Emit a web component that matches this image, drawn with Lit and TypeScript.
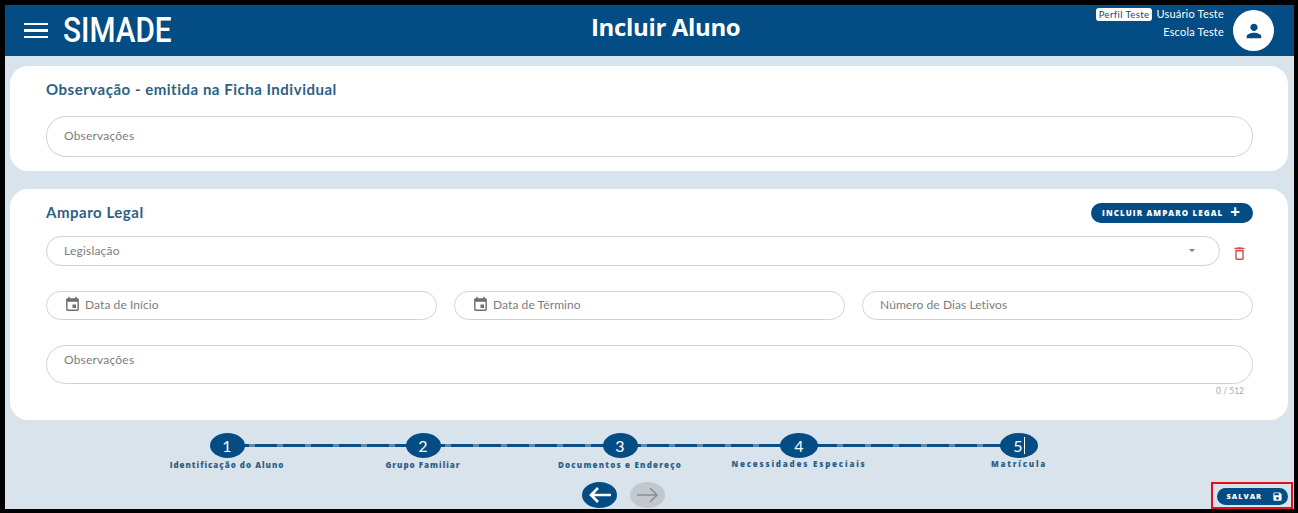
import { LitElement, html, css, svg } from "lit";
import { customElement } from "lit/decorators.js";

const icon = (d: string, cls: string) => html`<svg class=${cls} viewBox="0 0 24 24" fill="currentColor">${svg`<path d=${d}></path>`}</svg>`;
const CAL = "M17 12h-5v5h5v-5zM16 1v2H8V1H6v2H5c-1.11 0-1.99.9-1.99 2L3 19c0 1.1.89 2 2 2h14c1.1 0 2-.9 2-2V5c0-1.1-.9-2-2-2h-1V1h-2zm3 18H5V8h14v11z";
const PERSON = "M12 12c2.21 0 4-1.79 4-4s-1.79-4-4-4-4 1.79-4 4 1.79 4 4 4zm0 2c-2.67 0-8 1.34-8 4v2h16v-2c0-2.66-5.33-4-8-4z";
const TRASH = "M6 19c0 1.1.9 2 2 2h8c1.1 0 2-.9 2-2V7H6v12zM8 9h8v10H8V9zm7.5-5l-1-1h-5l-1 1H5v2h14V4h-3.5z";
const SAVE = "M17 3H5c-1.11 0-2 .9-2 2v14c0 1.1.89 2 2 2h14c1.1 0 2-.9 2-2V7l-4-4zm-5 16c-1.66 0-3-1.34-3-3s1.34-3 3-3 3 1.34 3 3-1.34 3-3 3zm3-10H5V5h10v4z";
const steps = [
  { n: "1", label: "Identificação do Aluno", w: "w196", cls: "" },
  { n: "2", label: "Grupo Familiar", w: "w196", cls: "" },
  { n: "3", label: "Documentos e Endereço", w: "w198", cls: "" },
  { n: "4", label: "Necessidades Especiais", w: "w160", cls: "up wide" },
  { n: "5", label: "Matrícula", w: "w280", cls: "up wide caret" },
];

@customElement("app-root")
export class AppRoot extends LitElement {
  static styles = css`
    :host { display: block; width: 1298px; height: 513px; overflow: hidden; }
    * { box-sizing: border-box; }
    .frame { width: 1298px; height: 513px; border: solid #000; border-width: 5px 4px 4px 5px; background: #d9e3ec; font-family: Lato, "Open Sans", sans-serif; color: #7b7f83; display: flex; flex-direction: column; }
    header { height: 51px; flex: none; background: #034c84; color: #fff; display: grid; grid-template-columns: 586px 149px 1fr; align-items: center; }
    .brand { display: flex; align-items: center; padding-left: 19px; gap: 15px; }
    .menu { width: 24px; height: 16px; display: flex; flex-direction: column; justify-content: space-between; }
    .menu i { display: block; height: 2.4px; background: #fff; }
    .logo { font: 500 35px/1 Roboto, sans-serif; width: 109px; display: inline-block; transform: scaleX(.85); transform-origin: left center; }
    h1 { margin: 0; font: 700 24px/1 "Open Sans", sans-serif; white-space: nowrap; letter-spacing: -.35px; padding-bottom: 7px; }
    .user { justify-self: end; display: flex; align-items: center; padding-right: 20px; gap: 9px; }
    .who { font-size: 11px; text-align: right; display: flex; flex-direction: column; gap: 5px; line-height: 12px; padding-bottom: 15px; letter-spacing: .2px; }
    .badge { background: #fff; color: #034c84; font-size: 9.5px; border-radius: 3px; padding: 0 3px; margin-right: 4px; display: inline-block; line-height: 13px; letter-spacing: .4px; }
    .avatar { width: 41px; height: 41px; border-radius: 50%; background: #fff; color: #034c84; display: grid; place-items: center; }
    .avatar svg { width: 22px; height: 22px; }
    main { flex: none; padding: 10px 6px 0 5px; display: flex; flex-direction: column; gap: 18px; }
    .card { background: #fff; border-radius: 18px; padding: 0 35px 0 36px; }
    .c1 { height: 105px; padding-top: 13px; }
    .c2 { height: 231px; padding-top: 13px; }
    .head { display: flex; align-items: center; justify-content: space-between; height: 20px; }
    h2 { margin: 0; font: 700 15px/20px Lato, sans-serif; color: #2e5f85; letter-spacing: .52px; }
    .field { border: 1.5px solid #d2d2d2; border-radius: 20px; display: flex; align-items: center; padding: 0 17px 2px; font-size: 12px; letter-spacing: .2px; color: #7d7d7d; }
    .c1 .field { height: 41px; margin-top: 17px; }
    .btn { background: #034c84; color: #fff; border-radius: 10px; height: 20px; width: 162px; margin-top: 1px; display: flex; align-items: center; justify-content: flex-start; padding-left: 11px; gap: 7px; font: 800 8px/1 "Open Sans", sans-serif; letter-spacing: 1.1px; }
    .plus { font-size: 17px; font-weight: 700; line-height: 1; letter-spacing: 0; padding-bottom: 2px; }
    .selrow { display: flex; align-items: center; margin-top: 14px; }
    .sel { flex: 1; height: 30px; justify-content: space-between; padding-right: 24px; }
    .sel b { border: solid transparent; border-width: 3px 3.5px 0; border-top-color: #7a7a7a; }
    .trash { width: 17px; height: 17px; color: #e0494a; margin: 4px 5.5px 0 10.5px; flex: none; }
    .dates { display: grid; grid-template-columns: repeat(3, 1fr); gap: 17px; margin-top: 25px; }
    .dates .field { height: 29px; letter-spacing: .08px; }
    .date { gap: 4px; }
    .date svg { width: 17px; height: 17px; color: #6e6e6e; flex: none; }
    .area { height: 39px; margin-top: 25px; align-items: flex-start; padding-top: 6px; }
    .count { text-align: right; font-size: 8.5px; color: #a9a9a9; padding: 2px 9px 0 0; line-height: 11px; }
    .stepper { margin-top: 13px; padding-left: 124px; display: flex; position: relative; height: 49px; flex: none; }
    .line { position: absolute; left: 222px; width: 792px; top: 11px; height: 3px; background: repeating-linear-gradient(90deg, #0b4f86 0 22px, #5d88ab 22px 28px); }
    .step { display: flex; flex-direction: column; align-items: center; position: relative; }
    .w196 { width: 196px; } .w198 { width: 198px; } .w160 { width: 160px; } .w280 { width: 280px; }
    .dot { width: 35px; height: 25px; border-radius: 50%; background: #034c84; color: #fff; display: grid; place-items: center; font-size: 16px; }
    .wide .dot { width: 38px; }
    .caret .dot span { border-right: 1px solid #fff; padding-right: 1px; line-height: 17px; }
    .label { font: 800 8px/1 "Open Sans", sans-serif; color: #2e5f85; letter-spacing: 1px; white-space: nowrap; margin-top: 3px; }
    .w198 .label { letter-spacing: 1.2px; }
    .up .label { margin-top: 2px; letter-spacing: 1.8px; }
    .bottom { flex: none; height: 27px; display: flex; padding-left: 577px; padding-right: 1px; justify-content: space-between; }
    .nav { display: flex; gap: 13px; }
    .arrow { width: 35px; height: 26px; border-radius: 50%; display: grid; place-items: center; background: #034c84; color: #fff; }
    .arrow.off { background: #c3c8cc; color: #8a8f93; }
    .arrow svg { width: 24px; height: 18px; }
    .savebox { width: 82px; height: 27px; border: 2px solid #e0101c; display: flex; align-items: flex-end; justify-content: center; padding-bottom: 2px; }
    .save { width: 71px; height: 17px; border-radius: 9px; background: #034c84; color: #fff; display: flex; align-items: center; justify-content: flex-start; padding-left: 10px; gap: 10px; font: 800 7.5px/1 "Open Sans", sans-serif; letter-spacing: .95px; }
    .save svg { width: 11px; height: 11px; }
  `;

  render() {
    return html`<div class="frame">
      <header>
        <div class="brand"><div class="menu"><i></i><i></i><i></i></div><span class="logo">SIMADE</span></div>
        <h1>Incluir Aluno</h1>
        <div class="user">
          <div class="who"><div><span class="badge">Perfil Teste</span>Usuário Teste</div><div>Escola Teste</div></div>
          <div class="avatar">${icon(PERSON, "")}</div>
        </div>
      </header>
      <main>
        <section class="card c1">
          <div class="head"><h2>Observação - emitida na Ficha Individual</h2></div>
          <div class="field">Observações</div>
        </section>
        <section class="card c2">
          <div class="head"><h2>Amparo Legal</h2><div class="btn">INCLUIR AMPARO LEGAL <span class="plus">+</span></div></div>
          <div class="selrow"><div class="field sel">Legislação<b></b></div>${icon(TRASH, "trash")}</div>
          <div class="dates">
            <div class="field date">${icon(CAL, "")}Data de Início</div>
            <div class="field date">${icon(CAL, "")}Data de Término</div>
            <div class="field">Número de Dias Letivos</div>
          </div>
          <div class="field area">Observações</div>
          <div class="count">0 / 512</div>
        </section>
      </main>
      <div class="stepper">
        <div class="line"></div>
        ${steps.map((s) => html`<div class="step ${s.w} ${s.cls}"><div class="dot"><span>${s.n}</span></div><div class="label">${s.label}</div></div>`)}
      </div>
      <div class="bottom">
        <div class="nav">
          <div class="arrow"><svg viewBox="0 0 24 18" fill="none" stroke="currentColor" stroke-width="2.6"><path d="M23 9H3M10 2L3 9l7 7"></path></svg></div>
          <div class="arrow off"><svg viewBox="0 0 24 18" fill="none" stroke="currentColor" stroke-width="1.6"><path d="M1 9h20M14 2l7 7-7 7"></path></svg></div>
        </div>
        <div class="savebox"><div class="save">SALVAR ${icon(SAVE, "")}</div></div>
      </div>
    </div>`;
  }
}
